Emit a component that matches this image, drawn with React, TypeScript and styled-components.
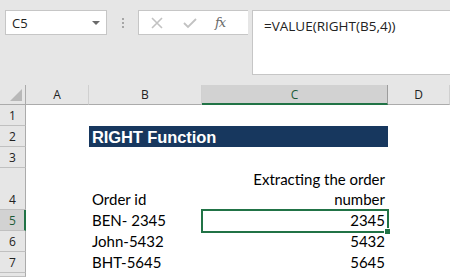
import styled, { createGlobalStyle } from 'styled-components';

const GlobalStyle = createGlobalStyle`
  html, body {
    margin: 0;
    padding: 0;
    background: #ffffff;
    overflow: hidden;
  }
`;

const Page = styled.div`
  width: 450px;
  height: 277px;
  overflow: hidden;
  display: flex;
  flex-direction: column;
  background: #ffffff;
`;

const Toolbar = styled.div`
  height: 85px;
  flex-shrink: 0;
  background: #e6e6e6;
  display: flex;
  align-items: flex-start;
  padding: 10px 0 0 5px;
  box-sizing: border-box;
  font-family: "Open Sans", "Noto Sans", sans-serif;
`;

const NameBox = styled.div`
  width: 102px;
  height: 25px;
  box-sizing: border-box;
  background: #ffffff;
  border: 1px solid #c6c6c6;
  display: flex;
  align-items: center;
  justify-content: space-between;
  padding: 0 6px 0 6px;
  font-size: 13px;
  color: #222222;
`;

const Caret = styled.span`
  width: 0;
  height: 0;
  border-left: 4px solid transparent;
  border-right: 4px solid transparent;
  border-top: 4px solid #6a6a6a;
  margin-top: 1px;
`;

const Grip = styled.div`
  width: 31px;
  height: 25px;
  display: flex;
  flex-direction: column;
  align-items: center;
  justify-content: center;
  gap: 2px;
  span {
    width: 2px;
    height: 2px;
    background: #a6a6a6;
  }
`;

const FxBox = styled.div`
  width: 110px;
  height: 25px;
  box-sizing: border-box;
  background: #ffffff;
  border: 1px solid #c6c6c6;
  border-right: none;
  display: flex;
  align-items: center;
  padding-left: 12px;
  gap: 20px;
`;

const FxLabel = styled.span`
  font-family: "DejaVu Serif", "Liberation Serif", serif;
  font-style: italic;
  font-size: 13px;
  color: #6a6a6a;
  letter-spacing: -1px;
  margin-left: -2px;
`;

const FormulaBox = styled.div`
  flex: 1;
  height: 65px;
  margin-left: 4px;
  box-sizing: border-box;
  background: #ffffff;
  border: 1px solid #c6c6c6;
  border-right: none;
  padding: 5px 0 0 11px;
  font-size: 13.5px;
  color: #222222;
  line-height: 20px;
`;

const Sheet = styled.div`
  flex: 1;
  display: grid;
  grid-template-columns: 26px 63px 113px 186px 1fr;
  grid-template-rows: 20px 21px 21px 21px 42px 21px 21px 21px 1fr;
  font-family: "Lato", "Open Sans", sans-serif;
`;

const Corner = styled.div`
  background: #e6e6e6;
  border-right: 1px solid #ababab;
  border-bottom: 1px solid #ababab;
  box-sizing: border-box;
  position: relative;
  &::after {
    content: '';
    position: absolute;
    right: 3px;
    bottom: 3px;
    width: 0;
    height: 0;
    border-left: 12px solid transparent;
    border-bottom: 12px solid #b8b8b8;
  }
`;

const ColHead = styled.div<{ $active?: boolean }>`
  background: ${p => (p.$active ? '#d2d2d2' : '#e6e6e6')};
  border-right: 1px solid ${p => (p.$active ? '#9c9c9c' : '#d0d0d0')};
  border-bottom: ${p => (p.$active ? '2px solid #217346' : '1px solid #ababab')};
  box-sizing: border-box;
  display: flex;
  align-items: center;
  justify-content: center;
  font-family: "Open Sans", "Noto Sans", sans-serif;
  font-size: 12px;
  color: ${p => (p.$active ? '#1d5b38' : '#222222')};
  padding-top: ${p => (p.$active ? '1px' : '0')};
`;

const RowHead = styled.div<{ $active?: boolean }>`
  background: ${p => (p.$active ? '#d2d2d2' : '#e6e6e6')};
  border-right: ${p => (p.$active ? '2px solid #217346' : '1px solid #ababab')};
  border-bottom: 1px solid #c0c0c0;
  box-sizing: border-box;
  display: flex;
  align-items: flex-end;
  justify-content: center;
  padding-bottom: 1px;
  padding-left: ${p => (p.$active ? '1px' : '0')};
  font-family: "Open Sans", "Noto Sans", sans-serif;
  font-size: 12px;
  color: ${p => (p.$active ? '#1d5b38' : '#222222')};
`;

const Cell = styled.div<{ $align?: 'left' | 'right'; $fill?: string; $bold?: boolean }>`
  position: relative;
  background: ${p => p.$fill || '#ffffff'};
  color: ${p => (p.$fill ? '#ffffff' : '#000000')};
  display: flex;
  flex-direction: column;
  justify-content: flex-end;
  align-items: ${p => (p.$align === 'right' ? 'flex-end' : 'flex-start')};
  text-align: ${p => p.$align || 'left'};
  padding: 0 3px 1px 3px;
  font-size: 15px;
  line-height: 20px;
  white-space: nowrap;
  font-weight: ${p => (p.$bold ? 700 : 400)};
  ${p => p.$bold && 'z-index: 1; font-family: "Liberation Sans", Arial, sans-serif; font-size: 16.5px; padding-bottom: 0; letter-spacing: -0.1px;'}
`;

const Selection = styled.div`
  position: absolute;
  z-index: 2;
  top: -1px;
  left: -1px;
  right: -1px;
  bottom: -2px;
  border: 2px solid #217346;
  pointer-events: none;
  &::after {
    content: '';
    position: absolute;
    right: -4px;
    bottom: -4px;
    width: 5px;
    height: 5px;
    background: #217346;
    border: 1px solid #ffffff;
  }
`;

const cols = ['A', 'B', 'C', 'D'];

function Row({ n, active, children }: { n: number; active?: boolean; children: React.ReactNode }) {
  return (
    <>
      <RowHead $active={active}>{n}</RowHead>
      {children}
    </>
  );
}

export default function App() {
  return (
    <Page>
      <GlobalStyle />
      <Toolbar>
        <NameBox>
          C5
          <Caret />
        </NameBox>
        <Grip>
          <span />
          <span />
          <span />
        </Grip>
        <FxBox>
          <svg width="12" height="12" viewBox="0 0 12 12">
            <path d="M1 1 L11 11 M11 1 L1 11" stroke="#c2c2c2" strokeWidth="1.6" fill="none" />
          </svg>
          <svg width="14" height="12" viewBox="0 0 14 12">
            <path d="M1 6 L5 10 L13 2" stroke="#c2c2c2" strokeWidth="1.8" fill="none" />
          </svg>
          <FxLabel>fx</FxLabel>
        </FxBox>
        <FormulaBox>=VALUE(RIGHT(B5,4))</FormulaBox>
      </Toolbar>
      <Sheet>
        <Corner />
        {cols.map(c => (
          <ColHead key={c} $active={c === 'C'}>{c}</ColHead>
        ))}
        <Row n={1}>
          <Cell /><Cell /><Cell /><Cell />
        </Row>
        <Row n={2}>
          <Cell />
          <Cell $fill="#17375e" $bold>RIGHT Function</Cell>
          <Cell $fill="#17375e" />
          <Cell />
        </Row>
        <Row n={3}>
          <Cell /><Cell /><Cell /><Cell />
        </Row>
        <Row n={4}>
          <Cell />
          <Cell>Order id</Cell>
          <Cell $align="right">
            <span>Extracting the order</span>
            <span>number</span>
          </Cell>
          <Cell />
        </Row>
        <Row n={5} active>
          <Cell />
          <Cell>BEN- 2345</Cell>
          <Cell $align="right">
            2345
            <Selection />
          </Cell>
          <Cell />
        </Row>
        <Row n={6}>
          <Cell />
          <Cell>John-5432</Cell>
          <Cell $align="right">5432</Cell>
          <Cell />
        </Row>
        <Row n={7}>
          <Cell />
          <Cell>BHT-5645</Cell>
          <Cell $align="right">5645</Cell>
          <Cell />
        </Row>
        <RowHead />
        <Cell /><Cell /><Cell /><Cell />
      </Sheet>
    </Page>
  );
}
